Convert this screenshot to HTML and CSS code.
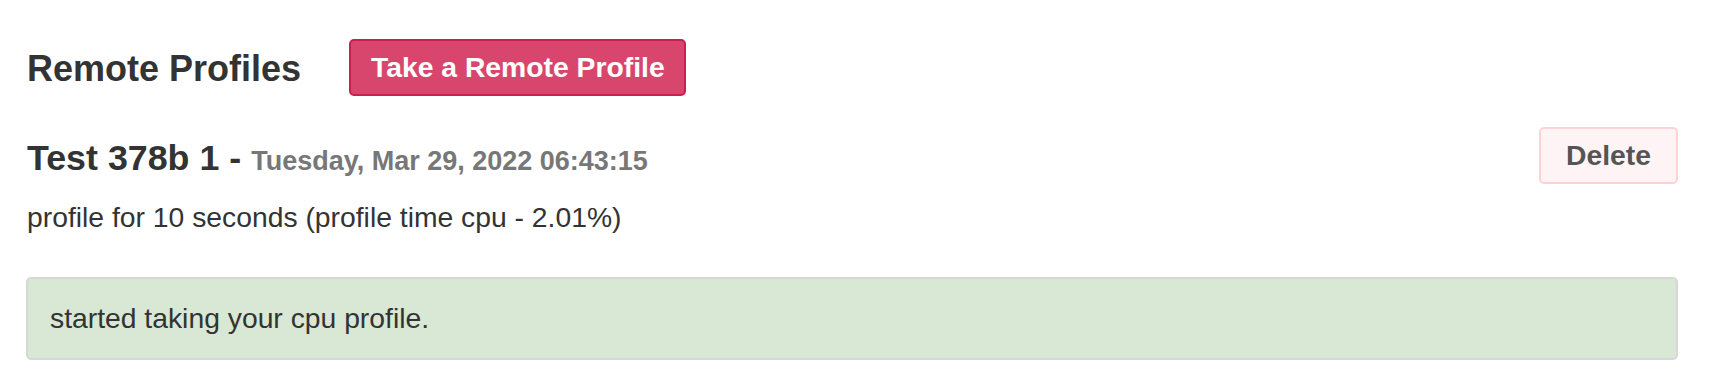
FILE: index.html
```html
<!DOCTYPE html>
<html lang="en">
<head>
<meta charset="utf-8">
<title>Remote Profiles</title>
<link rel="stylesheet" href="styles.css">
</head>
<body>
<div class="page">
  <div class="header-row">
    <h2 class="page-title">Remote Profiles</h2>
    <button class="btn btn-primary" type="button">Take a Remote Profile</button>
  </div>
  <div class="profile">
    <div class="profile-head">
      <h3 class="profile-title">Test 378b 1 - <span class="profile-date">Tuesday, Mar 29, 2022 06:43:15</span></h3>
      <button class="btn btn-delete" type="button">Delete</button>
    </div>
    <p class="profile-desc">profile for 10 seconds (profile time cpu - 2.01%)</p>
    <div class="alert">started taking your cpu profile.</div>
  </div>
</div>
</body>
</html>
```

FILE: styles.css
```css
html, body {
  margin: 0;
  padding: 0;
  background: #ffffff;
}

body {
  font-family: "Liberation Sans", Arial, Helvetica, sans-serif;
  color: #333333;
}

.page {
  padding: 39px 38px 0 26px;
}

.header-row {
  display: flex;
  align-items: center;
  height: 57px;
}

.page-title {
  margin: 0 48px 0 1px;
  padding-top: 3px;
  font-size: 36px;
  line-height: 40px;
  font-weight: bold;
  color: #333333;
}

.btn {
  display: inline-flex;
  align-items: center;
  justify-content: center;
  box-sizing: border-box;
  height: 57px;
  font-family: "Liberation Sans", Arial, Helvetica, sans-serif;
  font-size: 28.3px;
  font-weight: bold;
  border-radius: 5px;
  cursor: pointer;
  margin: 0;
}

.btn-primary {
  padding: 0 19px 0 20px;
  background: #d9466d;
  border: 2px solid #cc1f50;
  color: #ffffff;
}

.btn-delete {
  padding: 0 26px;
  width: 139px;
  background: #fff4f5;
  border: 2px solid #ffd3d4;
  color: #555555;
}

.profile {
  margin-top: 31px;
}

.profile-head {
  display: flex;
  justify-content: space-between;
  align-items: flex-start;
  height: 57px;
}

.profile-title {
  margin: 11px 0 0 1px;
  font-size: 35.8px;
  line-height: 40px;
  font-weight: bold;
  color: #333333;
}

.profile-date {
  font-size: 27px;
  font-weight: bold;
  color: #777777;
}

.profile-desc {
  margin: 16px 0 0 1px;
  font-size: 28.3px;
  line-height: 35px;
  color: #333333;
}

.alert {
  margin-top: 42px;
  padding: 22px 22px;
  border: 2px solid #d6d8d6;
  border-radius: 5px;
  background: #d9e8d4;
  font-size: 28.3px;
  line-height: 35px;
  color: #333333;
}
```
